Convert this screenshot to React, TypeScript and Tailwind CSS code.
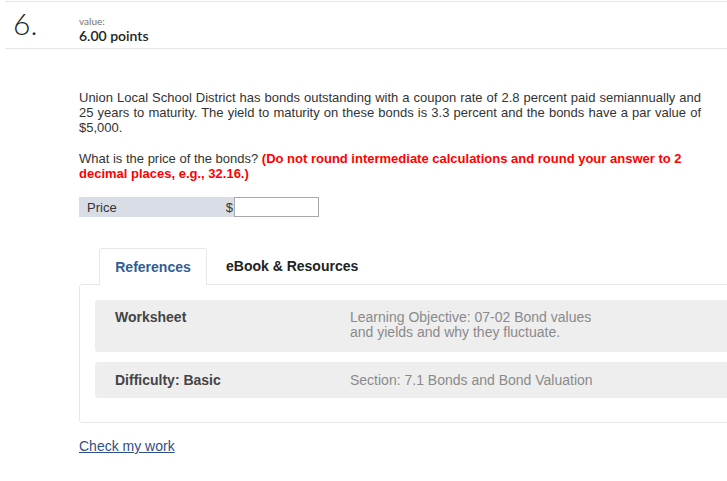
const App = () => {
  return (
    <div className="w-[727px] h-[481px] overflow-hidden bg-white relative">
      {/* Header */}
      <div className="mt-[1px] ml-[5px] border-t border-[#e6e6e6]" />
      <div className="ml-[5px] flex items-start h-[47px] border-b border-[#e6e6e6]">
        <div className="w-[74px] pl-[8px] pt-[6px] text-[30px] leading-[30px] font-light text-[#222] font-['Lato',sans-serif]">
          6.
        </div>
        <div className="pt-[14px] font-['Lato',sans-serif]">
          <div className="text-[10px] leading-[11px] text-[#7a716b]">value:</div>
          <div className="text-[14px] leading-[17px] font-semibold text-[#222]">6.00 points</div>
        </div>
      </div>

      {/* Body */}
      <div className="pl-[79px] pt-[41px] font-['Liberation_Sans',Arial,sans-serif] text-[13px] leading-[15px] text-[#333]">
        <p className="w-[622px] text-justify">
          Union Local School District has bonds outstanding with a coupon rate of 2.8 percent paid semiannually and 25 years to maturity. The yield to maturity on these bonds is 3.3 percent and the bonds have a par value of $5,000.
        </p>
        <p className="mt-[16px] w-[622px]">
          What is the price of the bonds?{" "}
          <span className="font-bold text-[#ff0000]">
            (Do not round intermediate calculations and round your answer to 2 decimal places, e.g., 32.16.)
          </span>
        </p>

        <div className="mt-[16px] flex items-stretch h-[20px]">
          <div className="w-[155px] bg-[#d9dde6] flex items-center justify-between pl-[8px] pr-[1px]">
            <span>Price</span>
            <span>$</span>
          </div>
          <input className="w-[85px] border border-[#a9a9a9] bg-white outline-none" />
        </div>

        {/* Tabs */}
        <div className="mt-[31px] relative w-[700px]">
          <div className="flex items-end pl-[20px] h-[37px]">
            <div className="h-[37px] w-[108px] border border-b-0 border-[#e8e8e8] rounded-t-[3px] bg-white flex items-center justify-center text-[14px] font-bold text-[#2f5d96] relative z-10">
              References
            </div>
            <div className="h-[37px] pl-[19px] flex items-center text-[14px] font-bold text-[#222]">
              eBook &amp; Resources
            </div>
          </div>
          <div className="-mt-[1px] border border-[#e8e8e8] rounded-[3px] pt-[15px] pb-[24px] pl-[15px]">
            <div className="flex flex-col gap-[10px]">
              <div className="h-[52px] bg-[#eeeeee] rounded-[3px] flex pt-[10px] pl-[20px] text-[14px] leading-[15px]">
                <div className="w-[235px] font-bold text-[#444]">Worksheet</div>
                <div className="text-[#8a8a8a]">
                  Learning Objective: 07-02 Bond values
                  <br />
                  and yields and why they fluctuate.
                </div>
              </div>
              <div className="h-[36px] bg-[#eeeeee] rounded-[3px] flex items-center pl-[20px] text-[14px]">
                <div className="w-[235px] font-bold text-[#444]">Difficulty: Basic</div>
                <div className="text-[#8a8a8a]">Section: 7.1 Bonds and Bond Valuation</div>
              </div>
            </div>
          </div>
        </div>

        <a href="#" className="block mt-[16px] text-[14px] text-[#2d4f86] underline">
          Check my work
        </a>
      </div>
    </div>
  );
};

export default App;
